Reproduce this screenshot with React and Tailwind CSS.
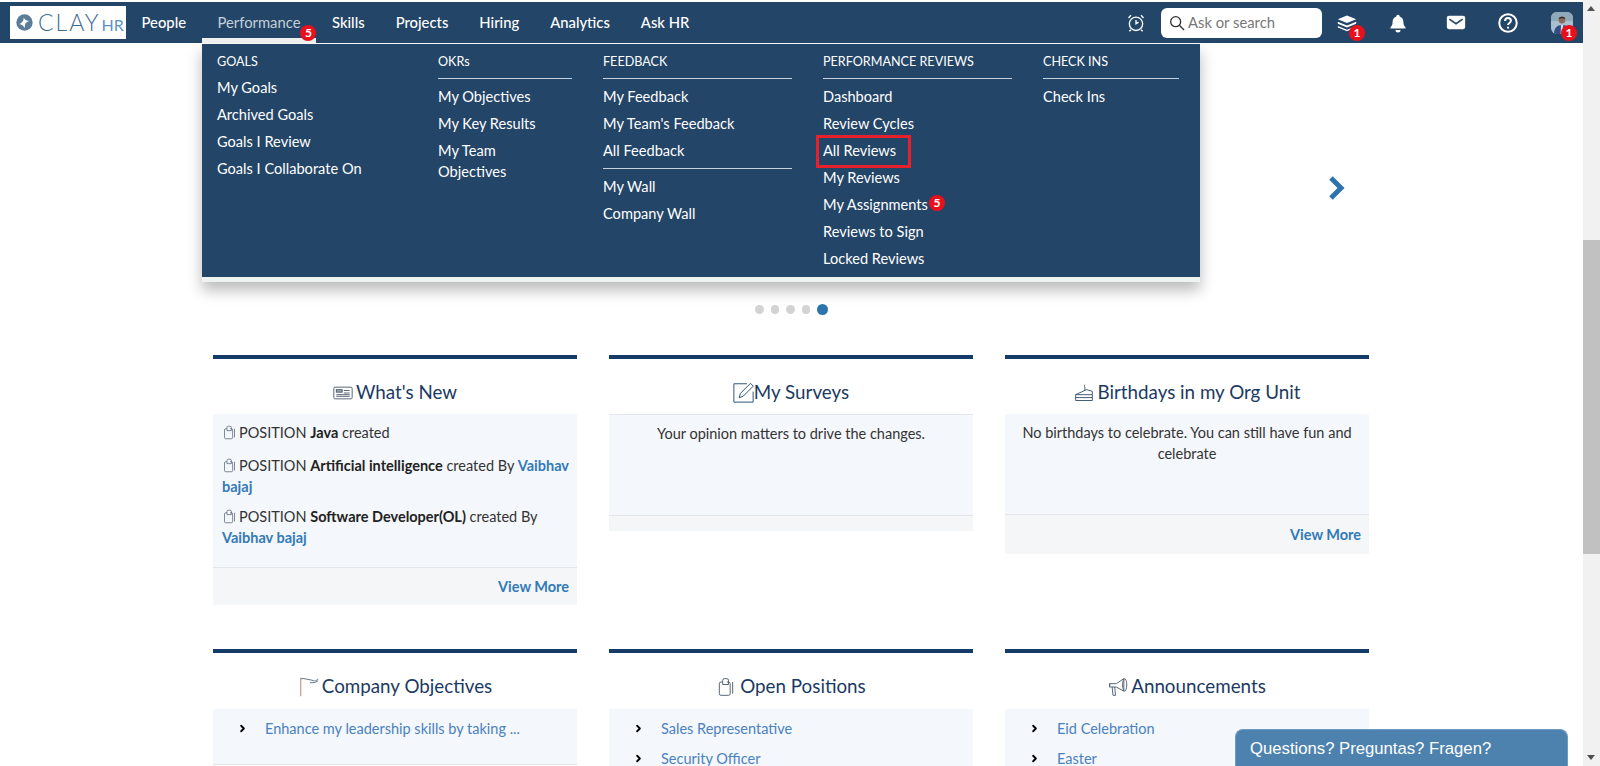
import React from 'react';
import { ChevronRight } from 'lucide-react';

const navItems = ['People', 'Performance', 'Skills', 'Projects', 'Hiring', 'Analytics', 'Ask HR'];

const menuCols = [
  { title: 'OKRs', w: 'w-[134px]', ml: 'ml-[0px]', listClass: 'pr-[30px]', groups: [['My Objectives', 'My Key Results', 'My Team Objectives']] },
  { title: 'FEEDBACK', w: 'w-[189px]', ml: 'ml-[31px]', groups: [['My Feedback', "My Team's Feedback", 'All Feedback'], ['My Wall', 'Company Wall']] },
  { title: 'PERFORMANCE REVIEWS', w: 'w-[189px]', ml: 'ml-[31px]', groups: [['Dashboard', 'Review Cycles', 'All Reviews', 'My Reviews', 'My Assignments', 'Reviews to Sign', 'Locked Reviews']] },
  { title: 'CHECK INS', w: 'w-[136px]', ml: 'ml-[31px]', groups: [['Check Ins']] },
];

function Badge({ n, className = '' }) {
  return (
    <span className={`absolute flex h-4 w-4 items-center justify-center rounded-full bg-[#e8101c] text-[12px] font-bold leading-none text-white ${className}`}>
      {n}
    </span>
  );
}

function Thin({ children, className = 'w-5 h-5', stroke = '#4a5a6a' }) {
  return (
    <svg viewBox="0 0 24 24" fill="none" stroke={stroke} strokeWidth="1.1" className={`inline-block shrink-0 ${className}`}>
      {children}
    </svg>
  );
}

const ClipIcon = () => (
  <Thin className="mr-[2px] inline-block h-[15px] w-[15px] align-[-2px]">
    <path d="M8 6h-2a2 2 0 0 0-2 2v12a2 2 0 0 0 2 2h9a2 2 0 0 0 2-2v-12a2 2 0 0 0-2-2h-2" />
    <path d="M8 9v-5a2 2 0 0 1 2-2h3a2 2 0 0 1 2 2v5z" />
    <path d="M20 6v14" />
  </Thin>
);

const titleIcons = {
  news: (
    <Thin className="mr-[3px] h-[20px] w-[20px]">
      <rect x="1" y="5" width="22" height="14" rx="1.5" />
      <rect x="4" y="8" width="7" height="3" fill="#9aa7b3" />
      <path d="M13 9h7M13 12h7M4 14h16M4 16h16" />
    </Thin>
  ),
  survey: (
    <Thin className="h-[21px] w-[21px]" stroke="#2a4f72">
      <path d="M23 11v12h-22v-21h15" />
      <path d="M7 18l1.500-5 11.500-11.500 3.200 3.200-11.500 11.500z" />
    </Thin>
  ),
  cake: (
    <Thin className="mr-[4px] h-[20px] w-[20px]" stroke="#33506e">
      <path d="M2 14l13-6 7 2v4zM2 14v7h20v-7M2 17.500h20" />
      <path d="M13 9v-4M13 5c-1-1 0-2 0-3" />
    </Thin>
  ),
  flag: (
    <Thin className="mr-[2px] h-[22px] w-[22px]" stroke="#b98a6a">
      <path d="M3 2v20" />
      <path d="M3 3c5-1 6 1 10 1s4 4 9-1" stroke="#6d7c8a" />
      <path d="M13 7c3 1 5 1 9-2" stroke="#6d7c8a" />
    </Thin>
  ),
  clip: (
    <Thin className="mr-[4px] h-[20px] w-[20px]">
      <path d="M8 6h-2a2 2 0 0 0-2 2v12a2 2 0 0 0 2 2h9a2 2 0 0 0 2-2v-12a2 2 0 0 0-2-2h-2" />
      <path d="M8 9v-5a2 2 0 0 1 2-2h3a2 2 0 0 1 2 2v5z" />
      <path d="M20 6v14" />
    </Thin>
  ),
  horn: (
    <Thin className="mr-[3px] h-[20px] w-[20px]" stroke="#4a5a6a">
      <path d="M2 8h8l9-6v15l-9-5h-8z" />
      <ellipse cx="20" cy="9.500" rx="2.500" ry="7.500" />
      <path d="M5 12l1 10h3l-1-10M2 8v4" />
    </Thin>
  ),
};

function Card({ icon, title, footer, footerClass = 'h-[16px]', titleClass = 'h-[55px] pt-[12px]', bodyClass, children }) {
  return (
    <section className="bg-white">
      <div className="h-[4px] bg-[#153c68]" />
      <h3 className={`flex items-center justify-center text-[18.800px] font-normal leading-none text-[#1b3a63] ${titleClass}`}>
        {titleIcons[icon]}
        {title}
      </h3>
      <div className={`bg-[#f4f7fb] text-[14.500px] leading-[21px] text-[#333] ${bodyClass}`}>{children}</div>
      {footer !== undefined && (
        <div className={`flex items-center justify-end border-t border-[#e3e5e8] bg-[#f4f6f8] pr-[8px] ${footerClass}`}>
          {footer && <a className="text-[14.500px] font-bold text-[#337ab7]">{footer}</a>}
        </div>
      )}
    </section>
  );
}

function Links({ items }) {
  return (
    <ul>
      {items.map((t) => (
        <li key={t} className="flex h-[30px] items-center text-[14.500px] text-[#4a82c0]">
          <ChevronRight size={11} strokeWidth={4} className="ml-[24px] mr-[17px] shrink-0 text-black" />
          <span>{t}</span>
        </li>
      ))}
    </ul>
  );
}

function MenuItem({ label }) {
  return (
    <li className="relative flex items-start py-[3px] text-[14.600px] leading-[21px] text-white">
      {label}
      {label === 'All Reviews' && (
        <span className="absolute left-[-7px] top-[-2px] h-[33px] w-[95px] border-[3px] border-[#e8202c]" />
      )}
      {label === 'My Assignments' && (
        <span className="relative ml-px mt-[1px] flex h-4 w-4 items-center justify-center rounded-full bg-[#e8101c] text-[12px] font-bold leading-none text-white">5</span>
      )}
    </li>
  );
}

function PerformanceMenu() {
  return (
    <div className="absolute left-[202px] top-[44px] z-20 h-[238px] w-[998px] border-b-[5px] border-[#eef2f1] bg-[#234567] shadow-[0_8px_14px_rgba(0,0,0,0.28)]">
      <div className="flex pl-[15px] pt-[9px]">
        <div className="w-[221px]">
          <h4 className="text-[12.600px] font-normal leading-[17px] text-white">GOALS</h4>
          <ul className="mt-[4px]">
            {['My Goals', 'Archived Goals', 'Goals I Review', 'Goals I Collaborate On'].map((t) => (
              <MenuItem key={t} label={t} />
            ))}
          </ul>
        </div>
        {menuCols.map((col) => (
          <div key={col.title} className={`${col.w} ${col.ml}`}>
            <h4 className="border-b border-[#c8d2dc] pb-[8px] text-[12.600px] font-normal leading-[17px] text-white">{col.title}</h4>
            {col.groups.map((g, i) => (
              <ul key={i} className={`${i > 0 ? 'mt-[4px] border-t border-[#c8d2dc] pt-[4px]' : 'mt-[4px]'} ${col.listClass || ''}`}>
                {g.map((t) => (
                  <MenuItem key={t} label={t} />
                ))}
              </ul>
            ))}
          </div>
        ))}
      </div>
    </div>
  );
}

function TopNav() {
  return (
    <nav className="relative z-30 mt-[2px] flex h-[41px] shrink-0 items-center bg-[#234567] text-white">
      <div className="ml-[10px] flex h-[33px] w-[116px] shrink-0 items-center bg-white pl-[6px]">
        <svg viewBox="0 0 24 24" className="h-[17px] w-[17px] shrink-0">
          <circle cx="12" cy="12" r="11.500" fill="#5b7d99" />
          <path d="M11 5c1 3 4 5 8 5-3 1-5 2-6 4l-1 6c-1-3-3-5-7-6 3-1 6-4 6-9z" fill="#fff" />
        </svg>
        <span className="ml-[5px] text-[23px] font-light leading-none tracking-[2px] text-[#3f6d92]">CLAY</span>
        <span className="ml-[1px] mt-[4px] text-[16px] leading-none text-[#5b94c2]">HR</span>
      </div>
      <ul className="flex h-full items-center">
        {navItems.map((t) =>
          t === 'Performance' ? (
            <li key={t} className="relative flex h-full items-center px-[16px] text-[14.800px] text-[#c5d0da] after:absolute after:bottom-0 after:left-0 after:h-[5px] after:w-full after:bg-[#eef0f0]">
              {t}
              <Badge n="5" className="right-0 top-[23px] z-10" />
            </li>
          ) : (
            <li key={t} className="flex h-full items-center px-[15.500px] text-[14.800px] font-medium">
              {t}
            </li>
          )
        )}
      </ul>
      <div className="ml-auto flex items-center">
        <svg viewBox="0 0 24 24" fill="none" stroke="#fff" strokeWidth="1.600" className="h-[20px] w-[20px]">
          <circle cx="12" cy="13" r="8" />
          <path d="M12 8.500v4.500l3-2M3 6l3-3.500M21 6l-3-3.500M6 20l-2 2M18 20l2 2" />
        </svg>
        <div className="ml-[15px] flex h-[30px] w-[161px] items-center rounded-[6px] bg-white pl-[8px] text-[14.800px] text-[#777]">
          <svg viewBox="0 0 24 24" fill="none" stroke="#333" strokeWidth="2" className="mr-[3px] h-[16px] w-[16px]">
            <circle cx="10" cy="10" r="7.500" />
            <path d="M15.500 15.500l7 7" />
          </svg>
          Ask or search
        </div>
        <div className="relative ml-[15px] h-[20px] w-[20px]">
          <svg viewBox="0 0 24 24" fill="#fff" className="h-[20px] w-[20px]">
            <path d="M12 3l11 4.500-11 4.500-11-4.500z" />
            <path d="M1 10.500l11 4.500 11-4.500v2.500l-11 4.500-11-4.500z" />
            <path d="M1 15.500l11 4.500 11-4.500v2l-11 4.500-11-4.500z" />
          </svg>
          <Badge n="1" className="left-[12px] top-[12px]" />
        </div>
        <svg viewBox="0 0 24 24" fill="#fff" className="ml-[31px] h-[20px] w-[20px]">
          <path d="M12 2a2 2 0 0 1 2 2.200c3.400 1 4.500 3.800 4.500 7 0 3 1 4.500 2.500 6v1.300h-18v-1.300c1.500-1.500 2.500-3 2.500-6 0-3.200 1.100-6 4.500-7a2 2 0 0 1 2-2.200z" />
          <path d="M9 20.500h6a3 3 0 0 1-6 0z" />
        </svg>
        <svg viewBox="0 0 24 18" className="ml-[38px] h-[15px] w-[20px]">
          <rect x="1" y="1" width="22" height="16" rx="2.500" fill="#fff" />
          <path d="M4 5l8 5.500 8-5.500" fill="none" stroke="#234567" strokeWidth="2" />
        </svg>
        <svg viewBox="0 0 24 24" fill="none" stroke="#fff" strokeWidth="2.400" className="ml-[32px] h-[20px] w-[20px]">
          <circle cx="12" cy="12" r="10.500" />
          <path d="M8.500 9.500c0-2.200 1.600-3.500 3.500-3.500s3.500 1.300 3.500 3.300c0 2.700-3.500 2.700-3.500 5.200" />
          <path d="M12 16.500v2.200" />
        </svg>
        <div className="relative ml-[33px] mr-[10px] h-[22px] w-[22px]">
          <svg viewBox="0 0 22 22" className="h-[22px] w-[22px] rounded-[6px]">
            <rect width="22" height="22" fill="#a9bfcf" />
            <rect width="22" height="9" fill="#8fa9ba" />
            <path d="M3 22c0-6 3-9 8-9s8 3 8 9z" fill="#2f4f86" />
            <path d="M10 13h2l.6 9h-3z" fill="#d8dde3" />
            <circle cx="11" cy="8" r="3.400" fill="#8a6a58" />
            <path d="M7.800 7c0-3 6.400-3 6.400 0-2-1-4.400-1-6.400 0z" fill="#2e2a2a" />
          </svg>
          <Badge n="1" className="left-[10px] top-[13px]" />
        </div>
      </div>
    </nav>
  );
}

function Carousel() {
  return (
    <div className="relative h-[312px] shrink-0">
      <svg viewBox="0 0 16 24" className="absolute left-[1327px] top-[133px] h-[24px] w-[18px]">
        <path d="M3 2l10 10-10 10" fill="none" stroke="#2d74ae" strokeWidth="5" />
      </svg>
      <div className="absolute bottom-[40px] left-[755px] flex items-center gap-[7px]">
        {[0, 1, 2, 3].map((i) => (
          <span key={i} className="h-[8.500px] w-[8.500px] rounded-full bg-[#d3d3d3]" />
        ))}
        <span className="h-[11px] w-[11px] rounded-full bg-[#2d74ae]" />
      </div>
    </div>
  );
}

export default function App() {
  return (
    <div className="flex h-[766px] overflow-hidden bg-white font-['Lato',sans-serif]">
      <div className="relative flex w-[1583px] flex-col">
        <TopNav />
        <PerformanceMenu />
        <Carousel />
        <main className="ml-[213px] grid w-[1156px] shrink-0 grid-cols-3 items-start gap-x-[32px] gap-y-[44px]">
          <Card icon="news" title="What's New" footer="View More" footerClass="h-[38px]" bodyClass="pl-[9px] pr-[2px] pt-[8px] pb-[9px]">
            <p className="mb-[12px]"><ClipIcon />POSITION <b className="font-bold text-[#222]">Java</b> created</p>
            <p className="mb-[9px]"><ClipIcon />POSITION <b className="font-bold text-[#222]">Artificial intelligence</b> created By <a className="font-bold text-[#337ab7]">Vaibhav bajaj</a></p>
            <p className="mb-[10px]"><ClipIcon />POSITION <b className="font-bold text-[#222]">Software Developer(OL)</b> created By <a className="font-bold text-[#337ab7]">Vaibhav bajaj</a></p>
          </Card>
          <Card icon="survey" title="My Surveys" footer="" footerClass="h-[16px]" bodyClass="h-[101px] border-t border-[#e3e5e8] px-[9px] pt-[8px] text-center">
            <p>Your opinion matters to drive the changes.</p>
          </Card>
          <Card icon="cake" title="Birthdays in my Org Unit" footer="View More" footerClass="h-[40px]" bodyClass="h-[100px] px-[9px] pt-[8px] text-center">
            <p>No birthdays to celebrate. You can still have fun and celebrate</p>
          </Card>
          <Card icon="flag" title="Company Objectives" titleClass="h-[56px] pt-[11px]" bodyClass="h-[56px] border-b border-[#e3e5e8] pt-[4px]">
            <Links items={['Enhance my leadership skills by taking ...']} />
          </Card>
          <Card icon="clip" title="Open Positions" titleClass="h-[56px] pt-[11px]" bodyClass="h-[70px] pt-[4px]">
            <Links items={['Sales Representative', 'Security Officer']} />
          </Card>
          <Card icon="horn" title="Announcements" titleClass="h-[56px] pt-[11px]" bodyClass="h-[70px] pt-[4px]">
            <Links items={['Eid Celebration', 'Easter']} />
          </Card>
        </main>
        <div className="absolute left-[1235px] top-[729px] z-30 h-[46px] w-[333px] rounded-t-[8px] border border-b-0 border-[#6d9bc2] bg-[#4d82ae] pl-[14px] pt-[6px] font-['Liberation_Sans',sans-serif] text-[16.700px] leading-[26px] text-white">
          Questions? Preguntas? Fragen?
        </div>
      </div>
      <div className="relative w-[17px] shrink-0 bg-[#f1f1f1]">
        <span className="absolute left-[4px] top-[6px] h-0 w-0 border-x-[4.500px] border-b-[5px] border-x-transparent border-b-[#505050]" />
        <div className="absolute left-0 top-[240px] h-[314px] w-full bg-[#c1c1c1]" />
        <span className="absolute bottom-[6px] left-[4px] h-0 w-0 border-x-[4.500px] border-t-[5px] border-x-transparent border-t-[#505050]" />
      </div>
    </div>
  );
}
